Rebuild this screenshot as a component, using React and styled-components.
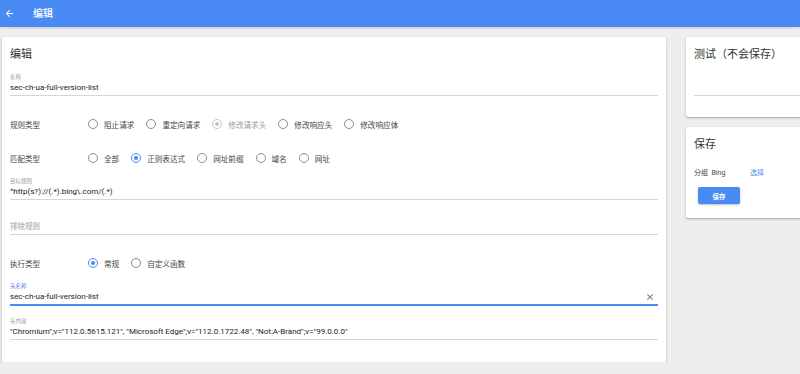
import styled, { createGlobalStyle } from "styled-components";

const GlobalStyle = createGlobalStyle`
  body {
    margin: 0;
    background: #eeeeee;
    font-family: Roboto, "Noto Sans CJK SC", sans-serif;
    color: #222;
    overflow: hidden;
  }
`;

const AppBar = styled.header`
  height: 27px;
  background: #4a8af4;
  display: flex;
  align-items: center;
  padding-left: 4px;
  gap: 18px;
  color: #fff;
  box-shadow: 0 1px 2px rgba(0, 0, 0, 0.15);
`;

const AppTitle = styled.div`
  font-size: 10px;
  font-weight: 500;
  line-height: 12px;
`;

const Page = styled.main`
  display: flex;
  gap: 20px;
  padding: 10px 0 0 2px;
  align-items: flex-start;
`;

const Card = styled.section`
  background: #fff;
  border-radius: 2px;
  box-shadow: 0 1px 3px rgba(0, 0, 0, 0.2), 0 1px 1px rgba(0, 0, 0, 0.12);
  padding: 8px 8px ${(p) => p.$pb || 22}px;
  margin-top: ${(p) => p.$mt || 0}px;
  box-sizing: border-box;
`;

const MainCard = styled(Card)`
  width: 664px;
  flex-shrink: 0;
`;

const Side = styled.aside`
  width: 140px;
  flex-shrink: 0;
`;

const CardTitle = styled.h2`
  margin: 0;
  font-size: 11px;
  font-weight: 400;
  line-height: 20px;
  color: #333;
`;

const Field = styled.div`
  margin-top: ${(p) => p.$mt}px;
  padding-bottom: 1px;
  border-bottom: ${(p) => (p.$focused ? "2px solid #4a8af4" : "1px solid #d6d6d6")};
`;

const FieldLabel = styled.div`
  height: 8px;
  font-size: 5.5px;
  line-height: 8px;
  color: ${(p) => (p.$focused ? "#4a8af4" : "#a0a0a0")};
`;

const FieldValue = styled.div`
  margin-top: 1px;
  height: 12px;
  line-height: 12px;
  font-size: ${(p) => (p.$placeholder ? "7.5px" : "8px")};
  color: ${(p) => (p.$placeholder ? "#9c9c9c" : "#222")};
  white-space: nowrap;
  display: flex;
  justify-content: space-between;
  align-items: center;
`;

const ClearButton = styled.span`
  display: flex;
  margin-right: 3px;
  color: #666;
`;

const RadioRow = styled.div`
  margin-top: ${(p) => p.$mt}px;
  height: 20px;
  display: flex;
  align-items: center;
`;

const RowLabel = styled.div`
  width: 78px;
  font-size: 7.5px;
  color: #444;
`;

const RadioItem = styled.label`
  display: flex;
  align-items: center;
  gap: 6px;
  margin-right: 12px;
  font-size: 7.6px;
  color: ${(p) => (p.$disabled ? "#9a9a9a" : "#444")};
`;

const Circle = styled.span`
  width: 10px;
  height: 10px;
  box-sizing: border-box;
  border-radius: 50%;
  border: 1px solid ${(p) => (p.$disabled ? "#c4c4c4" : p.$checked ? "#4a8af4" : "#8e8e8e")};
  display: flex;
  align-items: center;
  justify-content: center;

  &::after {
    content: "";
    display: ${(p) => (p.$checked ? "block" : "none")};
    width: 4px;
    height: 4px;
    border-radius: 50%;
    background: ${(p) => (p.$disabled ? "#c4c4c4" : "#4a8af4")};
  }
`;

const GroupRow = styled.div`
  margin-top: 13px;
  display: flex;
  align-items: center;
  line-height: 10px;
  font-size: 7px;
  color: #444;
`;

const GroupName = styled.span`
  width: 56px;
`;

const LinkText = styled.span`
  color: #4a8af4;
`;

const SaveButton = styled.button`
  margin: 9px 0 0 4px;
  width: 42px;
  height: 17px;
  border: none;
  border-radius: 2px;
  background: #4a8af4;
  color: #fff;
  font-family: inherit;
  font-size: 6.5px;
  font-weight: 700;
  padding: 0;
  box-shadow: 0 1px 2px rgba(0, 0, 0, 0.25);
`;

const BackIcon = () => (
  <svg width="11" height="11" viewBox="0 0 24 24" fill="#fff">
    <path d="M20 11H7.83l5.59-5.59L12 4l-8 8 8 8 1.41-1.41L7.83 13H20v-2z" />
  </svg>
);

const CloseIcon = () => (
  <svg width="10" height="10" viewBox="0 0 24 24" fill="currentColor">
    <path d="M19 6.41L17.59 5 12 10.59 6.41 5 5 6.41 10.59 12 5 17.59 6.41 19 12 13.41 17.59 19 19 17.59 13.41 12z" />
  </svg>
);

const Radio = ({ label, checked, disabled }) => (
  <RadioItem $disabled={disabled}>
    <Circle $checked={checked} $disabled={disabled} />
    {label}
  </RadioItem>
);

const RadioGroup = ({ title, options, mt }) => (
  <RadioRow $mt={mt}>
    <RowLabel>{title}</RowLabel>
    {options.map((o) => (
      <Radio key={o.label} {...o} />
    ))}
  </RadioRow>
);

const TextField = ({ label, value, placeholder, focused, clearable, mt }) => (
  <Field $mt={mt} $focused={focused}>
    <FieldLabel $focused={focused}>{label}</FieldLabel>
    <FieldValue $placeholder={!!placeholder}>
      <span>{value || placeholder}</span>
      {clearable && (
        <ClearButton>
          <CloseIcon />
        </ClearButton>
      )}
    </FieldValue>
  </Field>
);

const ruleTypes = [
  { label: "阻止请求" },
  { label: "重定向请求" },
  { label: "修改请求头", checked: true, disabled: true },
  { label: "修改响应头" },
  { label: "修改响应体" },
];

const matchTypes = [
  { label: "全部" },
  { label: "正则表达式", checked: true },
  { label: "网址前缀" },
  { label: "域名" },
  { label: "网址" },
];

const execTypes = [{ label: "常规", checked: true }, { label: "自定义函数" }];

const App = () => {
  return (
    <>
      <GlobalStyle />
      <AppBar>
        <BackIcon />
        <AppTitle>编辑</AppTitle>
      </AppBar>
      <Page>
        <MainCard>
          <CardTitle>编辑</CardTitle>
          <TextField mt={8} label="名称" value="sec-ch-ua-full-version-list" />
          <RadioGroup mt={18} title="规则类型" options={ruleTypes} />
          <RadioGroup mt={14} title="匹配类型" options={matchTypes} />
          <TextField mt={9} label="目标规则" value={"^http(s?)://(.*).bing\\.com/(.*)"} />
          <TextField mt={12} placeholder="排除规则" />
          <RadioGroup mt={18} title="执行类型" options={execTypes} />
          <TextField mt={9} label="头名称" value="sec-ch-ua-full-version-list" focused clearable />
          <TextField
            mt={11}
            label="头内容"
            value={'"Chromium";v="112.0.5615.121", "Microsoft Edge";v="112.0.1722.48", "Not:A-Brand";v="99.0.0.0"'}
          />
        </MainCard>
        <Side>
          <Card $pb={21}>
            <CardTitle>测试（不会保存）</CardTitle>
            <TextField mt={8} />
          </Card>
          <Card $mt={10} $pb={14}>
            <CardTitle>保存</CardTitle>
            <GroupRow>
              <GroupName>分组&nbsp;&nbsp;Bing</GroupName>
              <LinkText>选择</LinkText>
            </GroupRow>
            <SaveButton>保存</SaveButton>
          </Card>
        </Side>
      </Page>
    </>
  );
};

export default App;
